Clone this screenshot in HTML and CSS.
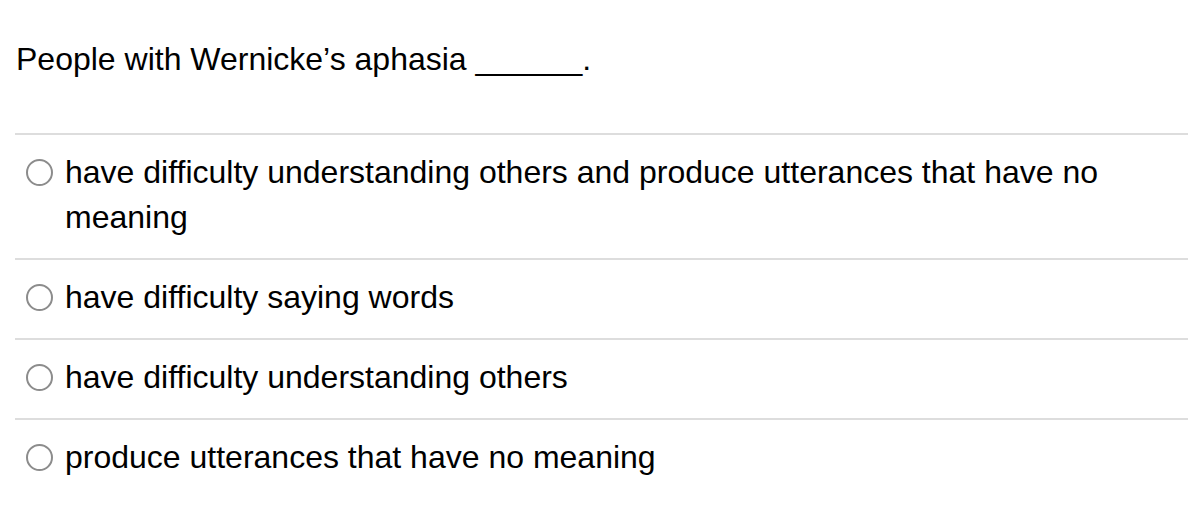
FILE: index.html
```html
<!DOCTYPE html>
<html>
<head>
<meta charset="utf-8">
<link rel="stylesheet" href="styles.css">
</head>
<body>
<div class="quiz">
  <div class="question">People with Wernicke’s aphasia ______.</div>
  <div class="options">
    <div class="option"><span class="radio"></span><span class="label">have difficulty understanding others and produce utterances that have no meaning</span></div>
    <div class="option"><span class="radio"></span><span class="label">have difficulty saying words</span></div>
    <div class="option"><span class="radio"></span><span class="label">have difficulty understanding others</span></div>
    <div class="option"><span class="radio"></span><span class="label">produce utterances that have no meaning</span></div>
  </div>
</div>
</body>
</html>
```
FILE: styles.css
```css
html, body {
  margin: 0;
  padding: 0;
  background: #fff;
}
body {
  font-family: "Liberation Sans", Arial, sans-serif;
  font-size: 32px;
  line-height: 45px;
  color: #000;
}
.quiz {
  padding: 37px 0 0 15px;
}
.question {
  padding-left: 1px;
  margin-bottom: 51px;
}
.option {
  display: flex;
  align-items: flex-start;
  border-top: 2px solid #dddddd;
  padding: 15px 40px 18px 11px;
}
.radio {
  flex: none;
  box-sizing: border-box;
  width: 27px;
  height: 27px;
  margin-top: 9px;
  margin-right: 12px;
  border: 2.5px solid #8c8c8c;
  border-radius: 50%;
}
.label {
  max-width: 1060px;
}
```
